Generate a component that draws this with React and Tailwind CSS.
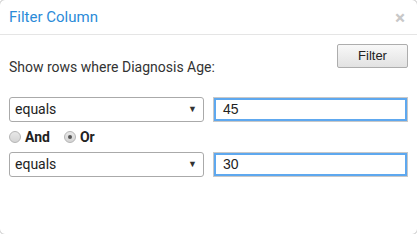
export default function App() {
  const Select = () => (
    <div className="w-[196px] h-[25px] border border-[#aaa] rounded-[3px] bg-white flex items-center justify-between pl-[5px] pr-[6px] text-[14px] text-[#222] font-['Roboto',sans-serif]">
      <span>equals</span>
      <span className="text-[9px] text-[#333]">▼</span>
    </div>
  );
  const Input = ({ v }) => (
    <div className="w-[196px] h-[25px] border border-[#c8c8c8] shadow-[inset_0_0_0_2px_#5ea8ef] bg-white flex items-center pl-[9px] text-[14px] text-[#222] font-['Liberation_Sans',Arial,sans-serif]">
      {v}
    </div>
  );
  const Radio = ({ checked }) => (
    <div className="w-[12px] h-[12px] rounded-full border border-[#b5b5b5] bg-gradient-to-b from-[#e8e8e8] to-[#d4d4d4] flex items-center justify-center">
      {checked && <div className="w-[4px] h-[4px] rounded-full bg-[#555]" />}
    </div>
  );
  return (
    <div className="w-[417px] h-[234px] bg-white relative overflow-hidden font-['Roboto',sans-serif]">
      <div className="absolute -inset-px rounded-[6px] border border-[#c4c4c4] pointer-events-none" />
      <div className="h-[35px] flex items-center justify-between pl-[9px] pr-[12px] border-b border-[#e5e5e5]">
        <span className="text-[15px] text-[#2b8bd8] leading-none mt-[1px]">Filter Column</span>
        <span className="text-[19px] font-bold text-[#c8c8c8] leading-none">×</span>
      </div>
      <div className="px-[9px]">
        <div className="flex justify-between items-start pt-[9px]">
          <span className="text-[14px] text-[#333] mt-[13px]">Show rows where Diagnosis Age:</span>
          <button className="w-[71px] h-[24px] border border-[#adadad] rounded-[2px] bg-gradient-to-b from-[#f8f8f8] to-[#e2e2e2] text-[13px] text-[#222] font-['Liberation_Sans',Arial,sans-serif]">
            Filter
          </button>
        </div>
        <div className="flex gap-[9px] mt-[19px]">
          <Select />
          <Input v="45" />
        </div>
        <div className="flex items-center h-[30px] text-[14px] font-bold text-[#222]">
          <Radio />
          <span className="ml-[4px]">And</span>
          <div className="ml-[14px]"><Radio checked /></div>
          <span className="ml-[4px]">Or</span>
        </div>
        <div className="flex gap-[9px]">
          <Select />
          <Input v="30" />
        </div>
      </div>
    </div>
  );
}
